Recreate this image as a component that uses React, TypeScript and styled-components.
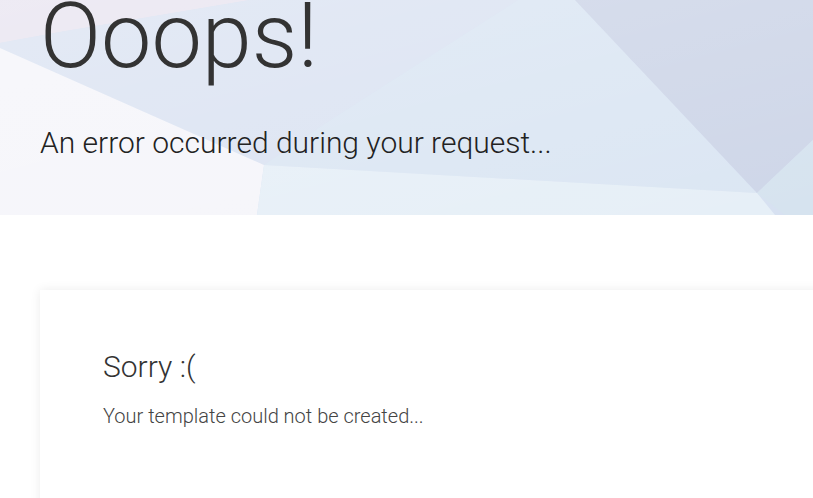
import * as React from 'react'
import styled, { createGlobalStyle } from 'styled-components'

const GlobalStyle = createGlobalStyle`
  html, body {
    margin: 0;
    padding: 0;
    background: #fff;
    overflow: hidden;
  }
  body {
    font-family: Roboto, "Liberation Sans", sans-serif;
    font-weight: 300;
  }
`

const Page = styled.div`
  min-height: 498px;
  background: #fff;
`

const Hero = styled.header`
  position: relative;
  height: 215px;
  overflow: hidden;
  background: #d7e1f1;
`

const HeroArt = styled.svg`
  position: absolute;
  inset: 0;
  width: 100%;
  height: 100%;
`

const HeroInner = styled.div`
  position: relative;
  padding: 0 40px;
`

const Title = styled.h1`
  margin: -8px 0 0;
  font-size: 90px;
  line-height: 90px;
  font-weight: 300;
  color: #333;
`

const Lead = styled.p`
  margin: 43px 0 0;
  font-size: 30px;
  line-height: 36px;
  font-weight: 300;
  color: #222;
`

const Main = styled.main`
  padding: 75px 0 0 40px;
`

const Card = styled.section`
  width: 900px;
  min-height: 260px;
  padding: 59px 63px;
  box-sizing: border-box;
  background: #fff;
  box-shadow: 0 0 10px rgba(0, 0, 0, 0.08);
`

const CardTitle = styled.h2`
  margin: 0;
  font-size: 30px;
  line-height: 36px;
  font-weight: 300;
  color: #333;
`

const CardText = styled.p`
  margin: 16px 0 0;
  font-size: 20px;
  line-height: 30px;
  font-weight: 300;
  color: #444;
`

const Polygons = () => (
  <HeroArt viewBox="0 0 813 215" preserveAspectRatio="none" aria-hidden="true">
    <defs>
      <linearGradient id="glow" x1="0" y1="0" x2="1" y2="1">
        <stop offset="0" stopColor="#ffffff" stopOpacity="0.25" />
        <stop offset="1" stopColor="#ffffff" stopOpacity="0" />
      </linearGradient>
    </defs>
    <polygon points="0,0 813,0 813,215 0,215" fill="#d7e1f1" />
    <polygon points="0,0 250,0 60,32 0,43" fill="#e8e4f0" />
    <polygon points="60,32 250,0 518,0 326,123 264,165 0,48 0,43" fill="#dbe3f2" />
    <polygon points="518,0 575,0 757,193 264,165 326,123" fill="#dbe6f3" />
    <polygon points="575,0 813,0 813,140 757,193" fill="#ced6e8" />
    <polygon points="813,140 813,215 785,215 757,193" fill="#d6e3ef" />
    <polygon points="0,48 264,165 257,215 0,215" fill="#f5f5fa" />
    <polygon points="264,165 757,193 775,215 257,215" fill="#e6eff7" />
    <polygon points="0,0 813,0 813,215 0,215" fill="url(#glow)" />
  </HeroArt>
)

export default function App() {
  return (
    <Page>
      <GlobalStyle />
      <Hero>
        <Polygons />
        <HeroInner>
          <Title>Ooops!</Title>
          <Lead>An error occurred during your request...</Lead>
        </HeroInner>
      </Hero>
      <Main>
        <Card>
          <CardTitle>Sorry :(</CardTitle>
          <CardText>Your template could not be created...</CardText>
        </Card>
      </Main>
    </Page>
  )
}
